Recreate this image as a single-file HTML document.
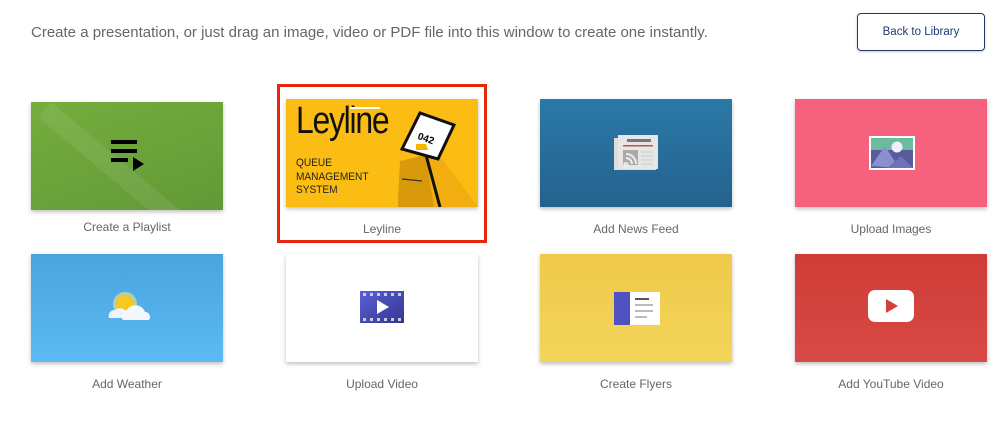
<!DOCTYPE html>
<html><head><style>
body{margin:0;width:1004px;height:443px;background:#fff;font-family:"Liberation Sans",sans-serif;position:relative;overflow:hidden}
.t{position:absolute;width:192px;height:108px;box-shadow:0 2px 4px rgba(0,0,0,.25);overflow:hidden}
.l{position:absolute;width:192px;text-align:center;font-size:12px;color:#666}
svg{position:absolute}
</style></head><body>
<div style="position:absolute;left:31px;top:24px;font-size:15px;color:#666">Create a presentation, or just drag an image, video or PDF file into this window to create one instantly.</div>
<div style="position:absolute;left:857px;top:13px;width:128px;height:38px;border:1px solid #1b3a6b;border-radius:4px;box-sizing:border-box;text-align:center;line-height:36px;font-size:11.5px;color:#1b3a6b;box-shadow:0 1px 2px rgba(0,0,0,.2)">Back to Library</div>

<div class="t" style="left:31px;top:102px;background:linear-gradient(160deg,#75ad3e,#629936)">
<div style="position:absolute;top:0;width:400px;height:20px;background:rgba(255,255,255,.08);transform:rotate(40deg);transform-origin:0 0;left:20px"></div>
<svg style="left:80px;top:38px" width="34" height="32"><rect x="0" y="0" width="26" height="4"/><rect x="0" y="9" width="26" height="4"/><rect x="0" y="18" width="17" height="4"/><path d="M22 17 L33 24 L22 31Z"/></svg></div>
<div class="l" style="left:31px;top:220px">Create a Playlist</div>

<div style="position:absolute;left:277px;top:84px;width:210px;height:159px;border:3px solid #e8260f;box-sizing:border-box"></div>
<div class="t" style="left:286px;top:99px;background:#fbbd14">
<div style="position:absolute;left:10px;top:1px;font-size:38px;color:#111;letter-spacing:-1.5px;transform:scaleX(.84);transform-origin:0 0">Leyline</div>
<div style="position:absolute;left:64px;top:8px;width:30px;height:2px;background:#fff"></div>
<div style="position:absolute;left:10px;top:58px;font-size:11px;line-height:13.5px;color:#222;transform:scaleX(.92);transform-origin:0 0">QUEUE<br>MANAGEMENT<br>SYSTEM</div>
<svg style="left:100px;top:0" width="92" height="108"><path d="M12 100 L14 62 L40 56 L48 108 L12 108Z" fill="#d89a0a"/><path d="M40 56 L50 52 L92 108 L48 108Z" fill="#f2ae10"/><path d="M40 56 L54 108" stroke="#111" stroke-width="3"/><path d="M16 50 L34 14 L68 26 L52 60Z" fill="#fff" stroke="#111" stroke-width="3"/><text x="32" y="42" font-size="10" font-weight="bold" transform="rotate(20 38 38)">042</text><path d="M30 45 h10 l2 6 h-12Z" fill="#f7b500"/><path d="M16 80 L36 82" stroke="#333" stroke-width="1.2"/></svg></div>
<div class="l" style="left:286px;top:222px">Leyline</div>

<div class="t" style="left:540px;top:99px;background:linear-gradient(#2b79a8,#24628e)">
<svg style="left:74px;top:36px" width="44" height="36"><rect x="0" y="3" width="42" height="32" fill="#ddd"/><rect x="4" y="0" width="40" height="34" fill="#e6e6e6"/><rect x="13" y="4" width="24" height="3" fill="#777"/><rect x="9" y="10" width="30" height="1.5" fill="#b54"/><rect x="9" y="15" width="15" height="15" fill="#aaa"/><path d="M12 28 a1.5 1.5 0 1 0 .1 0 M12 23 a6 6 0 0 1 6 6 M12 19 a10 10 0 0 1 10 10" stroke="#eee" fill="none" stroke-width="2"/><path d="M27 17h12M27 21h12M27 25h12M27 29h12" stroke="#ccc"/></svg></div>
<div class="l" style="left:540px;top:222px">Add News Feed</div>

<div class="t" style="left:795px;top:99px;background:#f6627d">
<svg style="left:74px;top:37px" width="46" height="34"><rect width="46" height="34" fill="#fff"/><rect x="2" y="2" width="42" height="30" fill="#5a5a9a"/><rect x="2" y="2" width="42" height="12" fill="#6cbb9f"/><circle cx="28" cy="11" r="5.5" fill="#eef"/><path d="M2 30 L16 10 L30 32Z" fill="#8b8fd0"/><path d="M18 32 L32 20 L44 32Z" fill="#6f72b8"/></svg></div>
<div class="l" style="left:795px;top:222px">Upload Images</div>

<div class="t" style="left:31px;top:254px;background:linear-gradient(#4aa3dc,#5cbaf4)">
<svg style="left:72px;top:36px" width="50" height="34"><circle cx="22" cy="14" r="12" fill="#f5e58a" opacity=".6"/><circle cx="22" cy="14" r="9" fill="#f7c81e"/><path d="M6 28 a6 6 0 0 1 6-8 a8 8 0 0 1 10 0 L22 28Z" fill="#eef4fa"/><path d="M20 30 a6 6 0 0 1 4-10 a10 10 0 0 1 18 2 a5 5 0 0 1 4 8Z" fill="#f4f7fb"/></svg></div>
<div class="l" style="left:31px;top:377px">Add Weather</div>

<div class="t" style="left:286px;top:254px;background:#fff">
<svg style="left:74px;top:37px" width="44" height="32"><defs><linearGradient id="g" x1="0" y1="0" x2="1" y2="1"><stop offset="0" stop-color="#5b5fd8"/><stop offset="1" stop-color="#33378e"/></linearGradient></defs><rect width="44" height="32" fill="url(#g)"/><g fill="#ccd"><rect x="3" y="2" width="3" height="3"/><rect x="10" y="2" width="3" height="3"/><rect x="17" y="2" width="3" height="3"/><rect x="24" y="2" width="3" height="3"/><rect x="31" y="2" width="3" height="3"/><rect x="38" y="2" width="3" height="3"/><rect x="3" y="27" width="3" height="3"/><rect x="10" y="27" width="3" height="3"/><rect x="17" y="27" width="3" height="3"/><rect x="24" y="27" width="3" height="3"/><rect x="31" y="27" width="3" height="3"/><rect x="38" y="27" width="3" height="3"/></g><path d="M17 9 L29 16 L17 23Z" fill="#fff"/></svg></div>
<div class="l" style="left:286px;top:377px">Upload Video</div>

<div class="t" style="left:540px;top:254px;background:linear-gradient(#efc94a,#f3d55a)">
<svg style="left:74px;top:38px" width="46" height="33"><rect width="46" height="33" fill="#fff"/><rect width="16" height="33" fill="#4f52c0"/><rect x="21" y="6" width="14" height="2" fill="#555"/><rect x="21" y="12" width="18" height="2" fill="#bbb"/><rect x="21" y="18" width="18" height="2" fill="#bbb"/><rect x="21" y="24" width="12" height="2" fill="#bbb"/></svg></div>
<div class="l" style="left:540px;top:377px">Create Flyers</div>

<div class="t" style="left:795px;top:254px;background:linear-gradient(#cf3c37,#d84a45)">
<svg style="left:73px;top:36px" width="46" height="32"><rect width="46" height="32" rx="7" fill="#fff"/><path d="M18 9 L30 16 L18 23Z" fill="#d3403b"/></svg></div>
<div class="l" style="left:795px;top:377px">Add YouTube Video</div>
</body></html>
